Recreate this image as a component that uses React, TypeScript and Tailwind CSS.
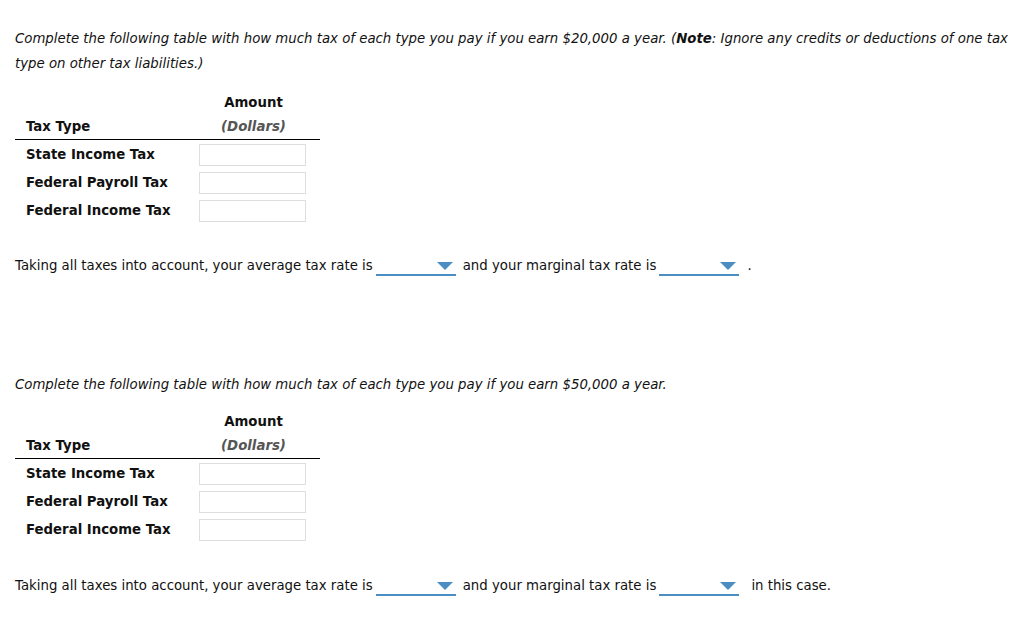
const font = { fontFamily: '"DejaVu Sans", Verdana, sans-serif' }

const rows = ['State Income Tax', 'Federal Payroll Tax', 'Federal Income Tax']

function Dropdown() {
  return (
    <span className="relative inline-block w-[80px] h-[20px] align-middle border-b-2 border-[#4d8ec2] ml-[3px] mr-[4px]">
      <svg className="absolute right-[3px] top-[6px]" width="16" height="8" viewBox="0 0 16 8">
        <polygon points="0,0 16,0 8,8" fill="#4d8ec2" />
      </svg>
    </span>
  )
}

function TaxTable() {
  return (
    <div className="w-[305px] ml-[15px]">
      <div className="flex border-b border-black">
        <div className="w-[172px] pl-[11px] flex items-end pb-[3px] leading-[18px] font-bold">Tax Type</div>
        <div className="flex-1 flex flex-col items-center leading-[24px]">
          <span className="font-bold">Amount</span>
          <span className="font-bold italic text-[#555]">(Dollars)</span>
        </div>
      </div>
      <div className="pt-[1px]">
        {rows.map((r) => (
          <div key={r} className="flex items-center h-[28px]">
            <div className="w-[172px] pl-[11px] font-bold leading-[18px]">{r}</div>
            <div className="w-[12px]" />
            <div className="w-[107px] h-[22px] border border-[#dedede] bg-white" />
          </div>
        ))}
      </div>
    </div>
  )
}

function RateLine({ ending }: { ending: string }) {
  return (
    <p className="ml-[15px] flex items-center leading-[20px]">
      <span>Taking all taxes into account, your average tax rate is</span>
      <Dropdown />
      <span className="ml-[3px]">and your marginal tax rate is</span>
      <Dropdown />
      <span className={ending === '.' ? 'ml-[4px]' : 'ml-[8px]'}>{ending}</span>
    </p>
  )
}

export default function App() {
  return (
    <div className="w-[1024px] h-[617px] bg-white text-[13.3px] text-[#111] overflow-hidden" style={font}>
      <div className="pt-[26px]">
        <p className="ml-[15px] italic leading-[25px] pr-[10px]">
          Complete the following table with how much tax of each type you pay if you earn $20,000 a year. (<b>Note</b>: Ignore any credits or deductions of one tax type on other tax liabilities.)
        </p>
        <div className="mt-[15px]">
          <TaxTable />
        </div>
        <div className="mt-[31px]">
          <RateLine ending="." />
        </div>
        <p className="ml-[15px] italic mt-[99px] leading-[20px]">
          Complete the following table with how much tax of each type you pay if you earn $50,000 a year.
        </p>
        <div className="mt-[15px]">
          <TaxTable />
        </div>
        <div className="mt-[32px]">
          <RateLine ending="in this case." />
        </div>
      </div>
    </div>
  )
}
